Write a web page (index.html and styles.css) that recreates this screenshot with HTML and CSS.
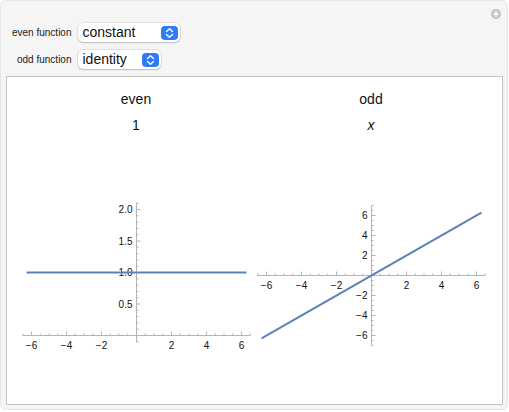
FILE: index.html
```html
<!DOCTYPE html>
<html>
<head>
<meta charset="utf-8">
<link rel="stylesheet" href="styles.css">
</head>
<body>
<div class="app">
  <div class="plus-badge"><svg width="10" height="10" viewBox="0 0 10 10"><circle cx="5" cy="5" r="5" fill="#c4c4c4"/><path d="M5 2.2V7.8M2.2 5H7.8" stroke="#fff" stroke-width="1.6"/></svg></div>
  <div class="controls">
    <span class="label">even function</span>
    <div class="popup popup-wide"><span class="popup-text">constant</span><span class="popup-btn"><svg width="17" height="14" viewBox="0 0 17 14"><path d="M5.5 5.5L8.5 2.8L11.5 5.5M5.5 8.5L8.5 11.2L11.5 8.5" fill="none" stroke="#fff" stroke-width="1.4" stroke-linecap="round" stroke-linejoin="round"/></svg></span></div>
    <span class="label">odd function</span>
    <div class="popup popup-narrow"><span class="popup-text">identity</span><span class="popup-btn"><svg width="17" height="14" viewBox="0 0 17 14"><path d="M5.5 5.5L8.5 2.8L11.5 5.5M5.5 8.5L8.5 11.2L11.5 8.5" fill="none" stroke="#fff" stroke-width="1.4" stroke-linecap="round" stroke-linejoin="round"/></svg></span></div>
  </div>
  <div class="output">
    <div class="plot-col">
      <div class="title">even</div>
      <div class="formula">1</div>
      <svg class="plot" width="234" height="230" viewBox="0 0 234 230">
        <g class="axis">
          <path d="M3.75 202.5H231.25M117.5 70V209"/>
          <path d="M12.5 202.5v-4M47.5 202.5v-4M82.5 202.5v-4M152.5 202.5v-4M187.5 202.5v-4M222.5 202.5v-4"/>
          <path d="M3.75 202.5v-2M21.25 202.5v-2M30 202.5v-2M38.75 202.5v-2M56.25 202.5v-2M65 202.5v-2M73.75 202.5v-2M91.25 202.5v-2M100 202.5v-2M108.75 202.5v-2M126.25 202.5v-2M135 202.5v-2M143.75 202.5v-2M161.25 202.5v-2M170 202.5v-2M178.75 202.5v-2M196.25 202.5v-2M205 202.5v-2M213.75 202.5v-2M231.25 202.5v-2"/>
          <path d="M117.5 171h4M117.5 139.5h4M117.5 108h4M117.5 76.5h4"/>
          <path d="M117.5 208.8h2M117.5 196.2h2M117.5 189.9h2M117.5 183.6h2M117.5 177.3h2M117.5 164.7h2M117.5 158.4h2M117.5 152.1h2M117.5 145.8h2M117.5 133.2h2M117.5 126.9h2M117.5 120.6h2M117.5 114.3h2M117.5 101.7h2M117.5 95.4h2M117.5 89.1h2M117.5 82.8h2M117.5 70.2h2"/>
        </g>
        <g class="ticklabels xlabels">
          <text x="12.5" y="215.6">−6</text>
          <text x="47.5" y="215.6">−4</text>
          <text x="82.5" y="215.6">−2</text>
          <text x="152.5" y="215.6">2</text>
          <text x="187.5" y="215.6">4</text>
          <text x="222.5" y="215.6">6</text>
        </g>
        <g class="ticklabels ylabels">
          <text x="113.5" y="80">2.0</text>
          <text x="113.5" y="111.5">1.5</text>
          <text x="113.5" y="143">1.0</text>
          <text x="113.5" y="174.5">0.5</text>
        </g>
        <path class="curve" d="M7.54 139.5H227.46"/>
      </svg>
    </div>
    <div class="plot-col">
      <div class="title">odd</div>
      <div class="formula formula-var">x</div>
      <svg class="plot" width="234" height="230" viewBox="0 0 234 230">
        <g class="axis">
          <path d="M3 142.5H231.5M117.5 72.5V212.5"/>
          <path d="M12.5 142.5v-4M47.5 142.5v-4M82.5 142.5v-4M152.5 142.5v-4M187.5 142.5v-4M222.5 142.5v-4"/>
          <path d="M3.75 142.5v-2M21.25 142.5v-2M30 142.5v-2M38.75 142.5v-2M56.25 142.5v-2M65 142.5v-2M73.75 142.5v-2M91.25 142.5v-2M100 142.5v-2M108.75 142.5v-2M126.25 142.5v-2M135 142.5v-2M143.75 142.5v-2M161.25 142.5v-2M170 142.5v-2M178.75 142.5v-2M196.25 142.5v-2M205 142.5v-2M213.75 142.5v-2M231.25 142.5v-2"/>
          <path d="M117.5 122.5h4M117.5 102.5h4M117.5 82.5h4M117.5 162.5h4M117.5 182.5h4M117.5 202.5h4"/>
          <path d="M117.5 137.5h2M117.5 132.5h2M117.5 127.5h2M117.5 117.5h2M117.5 112.5h2M117.5 107.5h2M117.5 97.5h2M117.5 92.5h2M117.5 87.5h2M117.5 77.5h2M117.5 72.5h2M117.5 147.5h2M117.5 152.5h2M117.5 157.5h2M117.5 167.5h2M117.5 172.5h2M117.5 177.5h2M117.5 187.5h2M117.5 192.5h2M117.5 197.5h2M117.5 207.5h2M117.5 212.5h2"/>
        </g>
        <g class="ticklabels xlabels">
          <text x="12.5" y="155.6">−6</text>
          <text x="47.5" y="155.6">−4</text>
          <text x="82.5" y="155.6">−2</text>
          <text x="152.5" y="155.6">2</text>
          <text x="187.5" y="155.6">4</text>
          <text x="222.5" y="155.6">6</text>
        </g>
        <g class="ticklabels ylabels">
          <text x="113.5" y="86">6</text>
          <text x="113.5" y="106">4</text>
          <text x="113.5" y="126">2</text>
          <text x="113.5" y="166">−2</text>
          <text x="113.5" y="186">−4</text>
          <text x="113.5" y="206">−6</text>
        </g>
        <path class="curve" d="M7.54 205.33L227.46 79.67"/>
      </svg>
    </div>
  </div>
</div>
</body>
</html>
```

FILE: styles.css
```css
html, body {
  margin: 0;
  padding: 0;
  background: #ffffff;
}

.app {
  position: relative;
  box-sizing: border-box;
  width: 508px;
  height: 410px;
  background: #f5f5f5;
  border: 1px solid #e6e6e6;
  border-radius: 6px;
  font-family: "Liberation Sans", Arial, sans-serif;
}

.plus-badge {
  position: absolute;
  top: 8px;
  left: 490px;
  width: 10px;
  height: 10px;
  line-height: 0;
}

.controls {
  display: grid;
  grid-template-columns: auto auto;
  justify-content: start;
  align-items: center;
  column-gap: 6px;
  row-gap: 8px;
  padding: 22px 0 0 11px;
}

.label {
  justify-self: end;
  font-size: 10px;
  color: #222;
}

.popup {
  position: relative;
  box-sizing: border-box;
  height: 19px;
  display: flex;
  align-items: center;
  justify-content: space-between;
  padding: 0 2px 0 5px;
  background: #ffffff;
  border-radius: 5px;
  box-shadow: 0 0 0 0.5px rgba(0, 0, 0, 0.14), 0 1px 1.5px rgba(0, 0, 0, 0.18);
}

.popup-wide { width: 102px; }
.popup-narrow { width: 83px; }

.popup-text {
  font-size: 14px;
  color: #111;
  line-height: 19px;
}

.popup-btn {
  width: 17px;
  height: 14px;
  border-radius: 4px;
  background: #2e7cf6;
  line-height: 0;
}

.output {
  box-sizing: border-box;
  width: 497px;
  height: 329px;
  margin: 7px 0 0 5px;
  padding: 14px 0 0 12px;
  background: #ffffff;
  border: 1px solid #c4c4c4;
  display: flex;
  gap: 1px;
}

.plot-col {
  width: 234px;
  display: flex;
  flex-direction: column;
  align-items: center;
}

.title {
  font-size: 14px;
  line-height: 16px;
  color: #111;
}

.formula {
  margin-top: 10px;
  font-size: 14px;
  line-height: 16px;
  color: #111;
}

.formula-var {
  font-style: italic;
}

.plot {
  display: block;
}

.axis path {
  fill: none;
  stroke: #b3b3b3;
  stroke-width: 1;
}

.ticklabels text {
  font-family: "Liberation Sans", Arial, sans-serif;
  font-size: 10px;
  fill: #111;
}

.xlabels text { text-anchor: middle; }
.ylabels text { text-anchor: end; }

.curve {
  fill: none;
  stroke: #5e81b5;
  stroke-width: 2;
}
```
